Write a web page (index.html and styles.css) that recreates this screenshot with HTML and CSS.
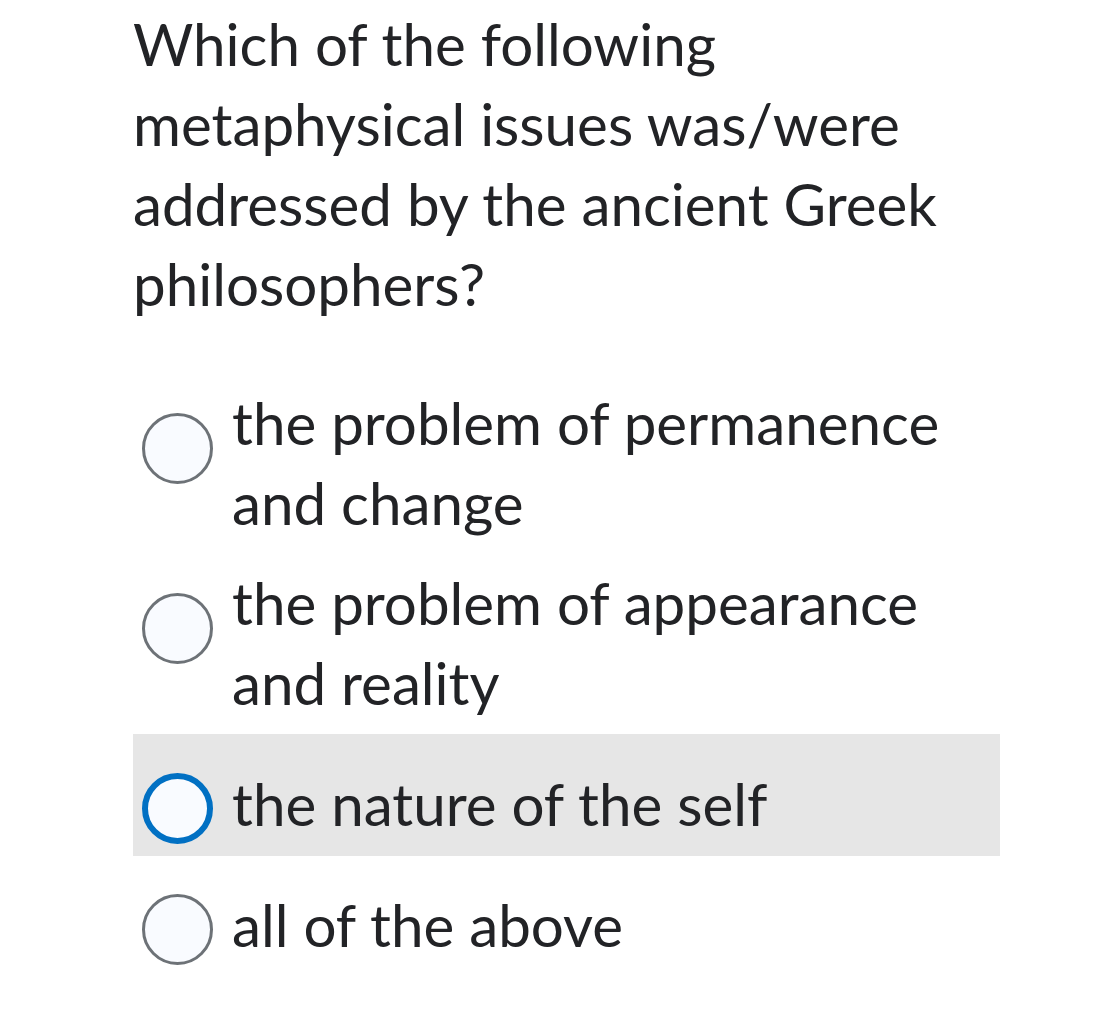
FILE: index.html
```html
<!DOCTYPE html>
<html lang="en">
<head>
<meta charset="utf-8">
<title>Quiz question</title>
<link rel="stylesheet" href="styles.css">
</head>
<body>
<div class="quiz">
  <p class="question">Which of the following metaphysical issues was/were addressed by the ancient Greek philosophers?</p>
  <div class="options">
    <label class="option option-multi opt1">
      <span class="radio"></span>
      <span class="label-text">the problem of permanence and change</span>
    </label>
    <label class="option option-multi opt2">
      <span class="radio"></span>
      <span class="label-text">the problem of appearance and reality</span>
    </label>
    <label class="option option-single option-focused opt3">
      <span class="radio radio-focused"></span>
      <span class="label-text">the nature of the self</span>
    </label>
    <label class="option option-single opt4">
      <span class="radio"></span>
      <span class="label-text">all of the above</span>
    </label>
  </div>
</div>
</body>
</html>
```

FILE: styles.css
```css
html, body {
  margin: 0;
  padding: 0;
  background: #ffffff;
}

body {
  font-family: Lato, "Noto Sans", sans-serif;
  color: #222326;
}

.quiz {
  margin-left: 133px;
  width: 867px;
  padding-top: 3px;
}

.question {
  margin: 0;
  padding-left: 0;
  font-size: 58.3px;
  line-height: 80px;
  width: 840px;
}

.options {
  margin-top: 49px;
  display: flex;
  flex-direction: column;
}

.option {
  display: flex;
  align-items: flex-start;
  gap: 19px;
  padding-left: 9px;
  font-size: 58.3px;
  line-height: 80px;
}

.label-text {
  display: block;
  width: 760px;
}

.opt1, .opt2 {
  padding-top: 10px;
  padding-bottom: 10px;
}

.opt2 {
  padding-bottom: 12px;
}

.opt3 {
  padding-top: 29px;
  padding-bottom: 12px;
  background: #e6e6e6;
}

.opt4 {
  padding-top: 28px;
}

.radio {
  flex: none;
  box-sizing: border-box;
  width: 71px;
  height: 71px;
  border-radius: 50%;
  border: 3px solid #6d7277;
  background: #f9fbff;
}

.option-multi .radio {
  margin-top: 31px;
}

.option-single .radio {
  margin-top: 10px;
}

.radio-focused {
  border: 6px solid #0170c3;
}
```
